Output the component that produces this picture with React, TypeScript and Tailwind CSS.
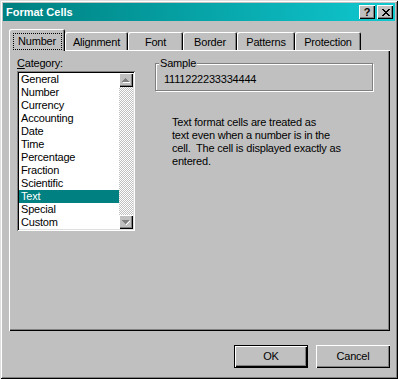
import type { ReactNode } from "react";

const raised =
  "shadow-[inset_1px_1px_0_#fff,inset_-1px_-1px_0_#000,inset_-2px_-2px_0_#808080]";

const categories = [
  "General",
  "Number",
  "Currency",
  "Accounting",
  "Date",
  "Time",
  "Percentage",
  "Fraction",
  "Scientific",
  "Text",
  "Special",
  "Custom",
];

const tabs = [
  { label: "Alignment", w: "w-[63px]" },
  { label: "Font", w: "w-[55px]" },
  { label: "Border", w: "w-[54px]" },
  { label: "Patterns", w: "w-[58px]" },
  { label: "Protection", w: "w-[66px]" },
];

export default function App() {
  return (
    <div
      className="w-[398px] h-[379px] bg-[#c0c0c0] p-[3px] flex flex-col text-black text-[11px] tracking-[-0.2px] shadow-[inset_1px_1px_0_#dfdfdf,inset_-1px_-1px_0_#000,inset_2px_2px_0_#fff,inset_-2px_-2px_0_#808080]"
      style={{ fontFamily: '"Liberation Sans", Arial, sans-serif' }}
    >
      {/* title bar */}
      <div className="h-[18px] flex items-center justify-between pl-[3px] pr-[2px] bg-gradient-to-r from-[#008080] to-[#10c8d0]">
        <span className="text-white font-bold text-[11px] tracking-normal">Format Cells</span>
        <div className="flex gap-[2px]">
          <TitleButton>
            <span className="font-bold text-[11px] leading-none">?</span>
          </TitleButton>
          <TitleButton>
            <CloseGlyph />
          </TitleButton>
        </div>
      </div>

      <div className="flex flex-col pl-[6px] pr-[5px] mt-[8px]">
        {/* tabs */}
        <div className="flex items-end h-[21px]">
          <div
            className={`relative z-10 w-[56px] h-[22px] -mb-[1px] bg-[#c0c0c0] rounded-t-[2px] flex justify-center pt-[4px] shadow-[inset_1px_1px_0_#fff,inset_-1px_0_0_#000,inset_-2px_0_0_#808080]`}
          >
            <span className="w-[49px] h-[17px] border border-dotted border-black flex items-center justify-center leading-none">
              Number
            </span>
          </div>
          {tabs.map((t) => (
            <div
              key={t.label}
              className={`${t.w} h-[18px] rounded-t-[2px] flex items-center justify-center pt-[3px] shadow-[inset_1px_1px_0_#fff,inset_-1px_0_0_#000,inset_-2px_0_0_#808080]`}
            >
              {t.label}
            </div>
          ))}
        </div>

        {/* panel */}
        <div className="h-[281px] flex pl-[8px] pt-[5px] shadow-[inset_1px_1px_0_#fff,inset_-1px_-1px_0_#000,inset_-2px_-2px_0_#808080]">
          <div className="w-[118px] flex flex-col">
            <div className="h-[16px] flex items-center">
              <span>
                <span className="underline">C</span>ategory:
              </span>
            </div>
            <div className="h-[160px] bg-white p-[2px] flex shadow-[inset_1px_1px_0_#808080,inset_-1px_-1px_0_#fff,inset_2px_2px_0_#000,inset_-2px_-2px_0_#dfdfdf]">
              <div className="flex-1 flex flex-col">
                {categories.map((c) => (
                  <div
                    key={c}
                    className={`h-[13px] pl-[2px] flex items-center leading-none ${
                      c === "Text" ? "bg-[#008080] text-white" : ""
                    }`}
                  >
                    {c}
                  </div>
                ))}
              </div>
              <div className="w-[14px] flex flex-col bg-[repeating-conic-gradient(#c0c0c0_0%_25%,#fff_0%_50%)] bg-[length:2px_2px]">
                <ScrollButton dir="up" />
                <div className="flex-1" />
                <ScrollButton dir="down" />
              </div>
            </div>
          </div>

          <div className="ml-[20px] w-[218px] flex flex-col">
            <div className="relative mt-[8px] h-[28px] border border-[#808080] shadow-[inset_1px_1px_0_#fff,1px_1px_0_#fff] pl-[8px] pt-[9px] leading-[13px]">
              <span className="absolute -top-[7px] left-[3px] px-[1px] bg-[#c0c0c0] leading-[13px]">
                Sample
              </span>
              1111222233334444
            </div>
            <p className="mt-[25px] pl-[17px] leading-[13px] whitespace-pre">
              {"Text format cells are treated as\ntext even when a number is in the\ncell.  The cell is displayed exactly as\nentered."}
            </p>
          </div>
        </div>

        {/* buttons */}
        <div className="mt-[14px] flex justify-end gap-[8px]">
          <button className="w-[74px] h-[23px] bg-[#c0c0c0] border border-black flex items-center justify-center shadow-[inset_1px_1px_0_#fff,inset_-1px_-1px_0_#000,inset_-2px_-2px_0_#808080]">
            OK
          </button>
          <button className={`w-[74px] h-[23px] bg-[#c0c0c0] flex items-center justify-center ${raised}`}>
            Cancel
          </button>
        </div>
      </div>
    </div>
  );
}

function TitleButton({ children }: { children: ReactNode }) {
  return (
    <div className={`w-[16px] h-[14px] bg-[#c0c0c0] flex items-center justify-center ${raised}`}>
      {children}
    </div>
  );
}

function CloseGlyph() {
  const px: [number, number][] = [
    [0, 0], [1, 0], [6, 0], [7, 0],
    [1, 1], [2, 1], [5, 1], [6, 1],
    [2, 2], [3, 2], [4, 2], [5, 2],
    [3, 3], [4, 3],
    [2, 4], [3, 4], [4, 4], [5, 4],
    [1, 5], [2, 5], [5, 5], [6, 5],
    [0, 6], [1, 6], [6, 6], [7, 6],
  ];
  return (
    <svg width="8" height="7" viewBox="0 0 8 7" shapeRendering="crispEdges" className="-mr-[1px]">
      {px.map(([x, y]) => (
        <rect key={`${x}-${y}`} x={x} y={y} width="1" height="1" fill="#000" />
      ))}
    </svg>
  );
}

function ScrollButton({ dir }: { dir: "up" | "down" }) {
  return (
    <div className={`w-[14px] h-[14px] bg-[#c0c0c0] flex items-center justify-center ${raised}`}>
      <svg width="8" height="5" viewBox="0 0 8 5" shapeRendering="crispEdges">
        {dir === "up" ? (
          <>
            <path d="M1 4h7v1h-7z M4 1h1v1h1v1h1v1h-1z" fill="#fff" />
            <path d="M3 0h1v1h1v1h1v1h1v1h-7v-1h1v-1h1v-1h1z" fill="#808080" />
          </>
        ) : (
          <>
            <path d="M4 4h1v1h-1z M5 3h1v1h-1z M6 2h1v1h-1z M7 1h1v1h-1z" fill="#fff" />
            <path d="M0 0h7v1h-1v1h-1v1h-1v1h-1v-1h-1v-1h-1v-1h-1z" fill="#808080" />
          </>
        )}
      </svg>
    </div>
  );
}
